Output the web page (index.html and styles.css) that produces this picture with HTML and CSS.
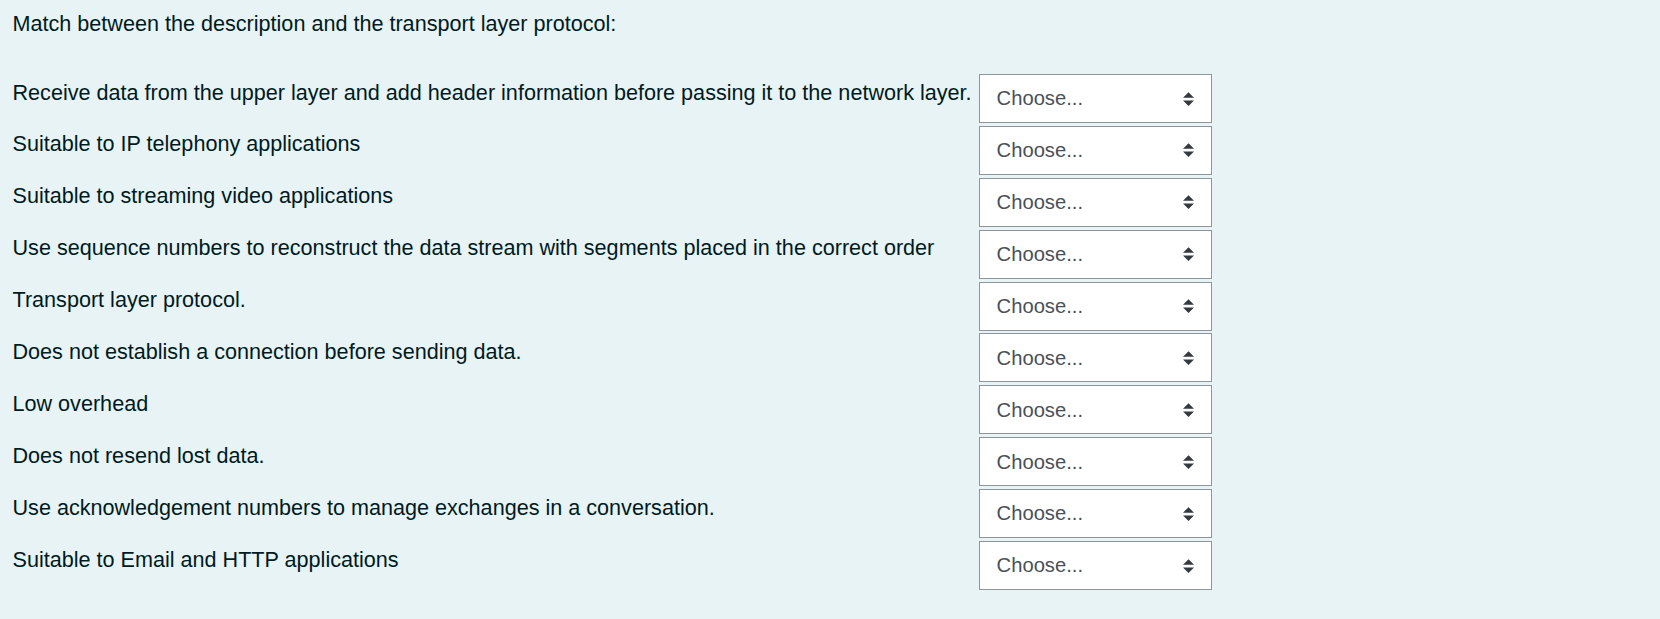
FILE: index.html
```html
<!DOCTYPE html>
<html lang="en">
<head>
<meta charset="utf-8">
<title>Match question</title>
<link rel="stylesheet" href="styles.css">
</head>
<body>
<div class="formulation">
  <div class="qtext">Match between the description and the transport layer protocol:</div>
  <div class="answer">
    <div class="text">Receive data from the upper layer and add header information before passing it to the network layer.</div>
    <div class="control"><select class="custom-select"><option>Choose...</option></select><svg class="arrows" viewBox="0 0 4 5" width="8" height="10"><path d="M2 0L0 2h4zm0 5L0 3h4z"/></svg></div>
    <div class="text">Suitable to IP telephony applications</div>
    <div class="control"><select class="custom-select"><option>Choose...</option></select><svg class="arrows" viewBox="0 0 4 5" width="8" height="10"><path d="M2 0L0 2h4zm0 5L0 3h4z"/></svg></div>
    <div class="text">Suitable to streaming video applications</div>
    <div class="control"><select class="custom-select"><option>Choose...</option></select><svg class="arrows" viewBox="0 0 4 5" width="8" height="10"><path d="M2 0L0 2h4zm0 5L0 3h4z"/></svg></div>
    <div class="text">Use sequence numbers to reconstruct the data stream with segments placed in the correct order</div>
    <div class="control"><select class="custom-select"><option>Choose...</option></select><svg class="arrows" viewBox="0 0 4 5" width="8" height="10"><path d="M2 0L0 2h4zm0 5L0 3h4z"/></svg></div>
    <div class="text">Transport layer protocol.</div>
    <div class="control"><select class="custom-select"><option>Choose...</option></select><svg class="arrows" viewBox="0 0 4 5" width="8" height="10"><path d="M2 0L0 2h4zm0 5L0 3h4z"/></svg></div>
    <div class="text">Does not establish a connection before sending data.</div>
    <div class="control"><select class="custom-select"><option>Choose...</option></select><svg class="arrows" viewBox="0 0 4 5" width="8" height="10"><path d="M2 0L0 2h4zm0 5L0 3h4z"/></svg></div>
    <div class="text">Low overhead</div>
    <div class="control"><select class="custom-select"><option>Choose...</option></select><svg class="arrows" viewBox="0 0 4 5" width="8" height="10"><path d="M2 0L0 2h4zm0 5L0 3h4z"/></svg></div>
    <div class="text">Does not resend lost data.</div>
    <div class="control"><select class="custom-select"><option>Choose...</option></select><svg class="arrows" viewBox="0 0 4 5" width="8" height="10"><path d="M2 0L0 2h4zm0 5L0 3h4z"/></svg></div>
    <div class="text">Use acknowledgement numbers to manage exchanges in a conversation.</div>
    <div class="control"><select class="custom-select"><option>Choose...</option></select><svg class="arrows" viewBox="0 0 4 5" width="8" height="10"><path d="M2 0L0 2h4zm0 5L0 3h4z"/></svg></div>
    <div class="text">Suitable to Email and HTTP applications</div>
    <div class="control"><select class="custom-select"><option>Choose...</option></select><svg class="arrows" viewBox="0 0 4 5" width="8" height="10"><path d="M2 0L0 2h4zm0 5L0 3h4z"/></svg></div>
  </div>
</div>
</body>
</html>
```
FILE: styles.css
```css
html, body {
  margin: 0;
  padding: 0;
  background: #e7f3f5;
}
body {
  font-family: "Liberation Sans", Arial, sans-serif;
  font-size: 21.6px;
  color: #001a1e;
}
.formulation {
  padding: 8px 0 0 12.5px;
}
.qtext {
  line-height: 31.5px;
  margin-bottom: 34.5px;
}
.answer {
  display: grid;
  grid-template-columns: max-content 233px;
  column-gap: 7px;
  row-gap: 2.9px;
  align-items: start;
}
.text {
  line-height: 31.5px;
  padding-top: 2.5px;
}
.control {
  position: relative;
  height: 49px;
}
.custom-select {
  -webkit-appearance: none;
  appearance: none;
  box-sizing: border-box;
  width: 100%;
  height: 49px;
  margin: 0;
  padding: 0 40px 0 17px;
  border: 1px solid #8f959e;
  border-radius: 0;
  background: #fff;
  color: #495057;
  font-family: "Liberation Sans", Arial, sans-serif;
  font-size: 20.2px;
  line-height: 1.5;
  outline: none;
}
.arrows {
  position: absolute;
  right: 17.5px;
  top: 17.5px;
  width: 11px;
  height: 14px;
  fill: #343a40;
  pointer-events: none;
}
```
